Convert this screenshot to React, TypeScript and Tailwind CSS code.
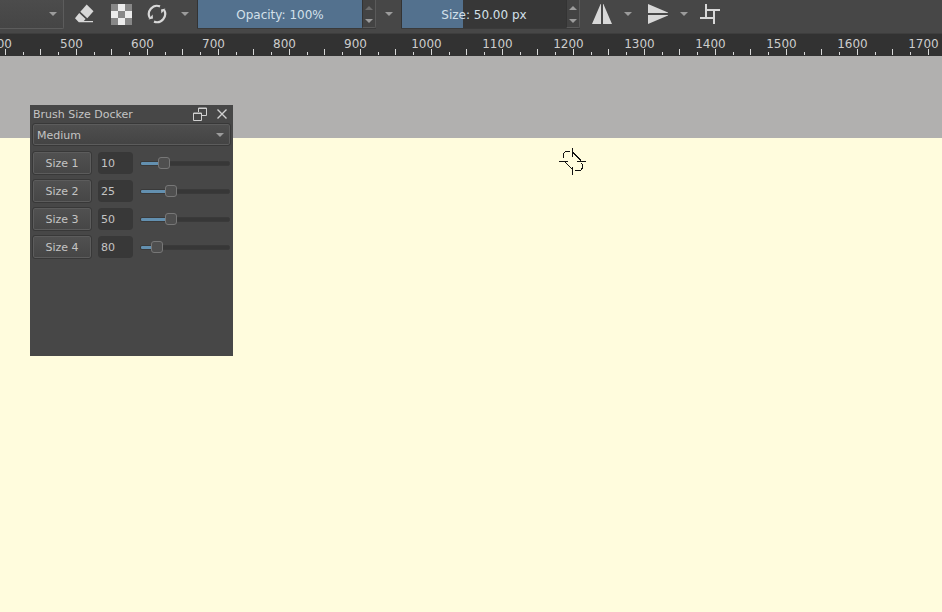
import { useState } from "react";

type BrushSize = {
  label: string;
  value: number;
  position: number;
};

const brushSizes: BrushSize[] = [
  { label: "Size 1", value: 10, position: 22 },
  { label: "Size 2", value: 25, position: 31 },
  { label: "Size 3", value: 50, position: 31 },
  { label: "Size 4", value: 80, position: 13 },
];

const rulerMarks = Array.from({ length: 14 }, (_, i) => 400 + i * 100);

function Caret({ up = false, dim = false }: { up?: boolean; dim?: boolean }) {
  return (
    <svg
      width="8"
      height="4"
      viewBox="0 0 8 4"
      className={dim ? "fill-[#6c6c6c]" : "fill-[#9c9c9c]"}
      aria-hidden="true"
    >
      <path d={up ? "M0 4L4 0L8 4Z" : "M0 0H8L4 4Z"} />
    </svg>
  );
}

function CaretButton({ label }: { label: string }) {
  return (
    <button
      type="button"
      aria-label={label}
      className="flex h-7 w-4 shrink-0 items-center justify-center"
    >
      <Caret />
    </button>
  );
}

interface SliderSpinProps {
  label: string;
  text: string;
  percent: number;
  atMax?: boolean;
}

function SliderSpin({ label, text, percent, atMax }: SliderSpinProps) {
  return (
    <div className="flex h-[29px] w-[179px] shrink-0 border-b border-[#3a3a3a]">
      <input
        type="text"
        aria-label={label}
        defaultValue={text}
        className="min-w-0 flex-1 border-l border-[#333] pt-px text-center text-[12px] text-[#d3e0ea] outline-none"
        style={{
          background: `linear-gradient(to right, #53718e ${percent}%, #373737 ${percent}%)`,
        }}
      />
      <div className="flex w-[14px] flex-col rounded-br-xs border border-t-0 border-[#5a5a5a] border-l-[#333] bg-[#434343]">
        <button
          type="button"
          aria-label={`Increase ${label}`}
          className="flex flex-1 items-center justify-center pt-0.5"
        >
          <Caret up dim={atMax} />
        </button>
        <button
          type="button"
          aria-label={`Decrease ${label}`}
          className="flex flex-1 items-center justify-center"
        >
          <Caret />
        </button>
      </div>
    </div>
  );
}

function Toolbar() {
  return (
    <header className="flex h-[33px] w-full items-start overflow-hidden bg-[#474747]">
      <div className="relative w-16 shrink-0">
        <select
          aria-label="Blending mode"
          className="h-[29px] w-full appearance-none rounded-br-xs border-r border-b border-[#5c5c5c] bg-linear-to-b from-[#4c4c4c] to-[#454545] outline-none"
        >
          <option aria-label="Normal" />
        </select>
        <span className="pointer-events-none absolute top-3 right-[7px]">
          <Caret />
        </span>
      </div>

      <button type="button" aria-label="Eraser" className="ml-[6px] p-1 pt-[3px]">
        <svg width="22" height="22" viewBox="0 0 22 22" fill="#d8d8d8">
          <path d="M12.7 1.5L19.5 8.2L13.3 15.2L6.3 8.7Z" />
          <path d="M5.2 10L11.6 16L9.8 18H19V19.2H4.8L1 15.2Z" />
        </svg>
      </button>
      <button type="button" aria-label="Preserve alpha" className="ml-[7px] p-1">
        <svg width="21" height="21" viewBox="0 0 21 21">
          <path fill="#888" d="M0 0H21V21H0Z" />
          <path
            fill="#ececec"
            d="M7 0h7v7H7ZM0 7h7v7H0ZM14 7h7v7h-7ZM7 14h7v7H7Z"
          />
        </svg>
      </button>
      <button type="button" aria-label="Reload preset" className="ml-[6px] p-1 pt-[3px]">
        <svg width="22" height="22" viewBox="0 0 22 22">
          <g fill="none" stroke="#d8d8d8" strokeWidth="2.2">
            <path d="M14 3.4A8.2 8.2 0 0 0 4 15.2" />
            <path d="M8 18.6A8.2 8.2 0 0 0 18 6.8" />
          </g>
          <path fill="#d8d8d8" d="M2.6 16.4L7 15.6L6.6 11.6ZM19.4 5.6L15 6.4L15.4 10.4Z" />
        </svg>
      </button>
      <div className="ml-[5px]">
        <CaretButton label="Reload options" />
      </div>

      <div className="ml-1">
        <SliderSpin label="Opacity" text="Opacity: 100%" percent={100} atMax />
      </div>
      <div className="mr-1 ml-[5px]">
        <CaretButton label="Opacity options" />
      </div>
      <SliderSpin label="Size" text="Size: 50.00 px" percent={37} />

      <button type="button" aria-label="Horizontal mirror" className="ml-2 p-1">
        <svg width="20" height="20" viewBox="0 0 20 20" fill="#d8d8d8">
          <path d="M9 0V20H0L8.6 0ZM11 0V20H20L11.4 0Z" />
        </svg>
      </button>
      <div className="ml-1">
        <CaretButton label="Horizontal mirror options" />
      </div>
      <button type="button" aria-label="Vertical mirror" className="ml-2 p-1">
        <svg width="20" height="20" viewBox="0 0 20 20" fill="#d8d8d8">
          <path d="M0 0V9H20V8.6ZM0 11V20L20 11.4V11Z" />
        </svg>
      </button>
      <div className="ml-1">
        <CaretButton label="Vertical mirror options" />
      </div>
      <button type="button" aria-label="Wrap around" className="ml-1 p-1">
        <svg
          width="20"
          height="20"
          viewBox="0 0 20 20"
          fill="none"
          stroke="#d8d8d8"
          strokeWidth="2"
        >
          <path d="M6 0V14M0 14H15M5 6H20M14 6V20" />
        </svg>
      </button>
    </header>
  );
}

function Ruler() {
  return (
    <div className="h-[23px] w-full overflow-hidden border-t border-[#3e3e3e] bg-[#323232]">
      <div className="-ml-[35px] flex">
        {rulerMarks.map((mark) => (
          <div key={mark} className="w-[71px] shrink-0">
            <div className="h-[15px] pt-[3px] text-center text-[12px] leading-[14px] text-[#cdcdcd]">
              {mark}
            </div>
            <div className="flex items-end gap-[17px] pl-1">
              <span className="h-[6px] w-px bg-[#d8d8d8]" />
              <span className="h-[3px] w-px bg-[#d8d8d8]" />
              <span className="h-[6px] w-px bg-[#d8d8d8]" />
              <span className="h-[3px] w-px bg-[#d8d8d8]" />
            </div>
          </div>
        ))}
      </div>
    </div>
  );
}

function BrushSizeRow({ label, value, position }: BrushSize) {
  const [pos, setPos] = useState(position);
  // the thumb is 12px wide, so the filled part ends at its centre
  const fill = `calc(${pos}% + ${6 - pos * 0.12}px)`;

  return (
    <div className="flex items-center">
      <button
        type="button"
        className="h-[22px] w-[58px] shrink-0 rounded-xs border border-[#5c5c5c] bg-linear-to-b from-[#505050] to-[#464646] pt-0.5 outline outline-[#383838]"
      >
        {label}
      </button>
      <input
        type="text"
        aria-label={`${label} value`}
        defaultValue={value}
        className="ml-[7px] h-[22px] w-[35px] shrink-0 rounded-sm bg-[#383838] pl-[3px] outline-none"
      />
      <input
        type="range"
        aria-label={`${label} slider`}
        value={pos}
        onChange={(e) => setPos(Number(e.target.value))}
        className="ml-[7px] h-[5px] min-w-0 flex-1 appearance-none rounded-xs border border-[#3a3a3a] [&::-webkit-slider-thumb]:size-3 [&::-webkit-slider-thumb]:appearance-none [&::-webkit-slider-thumb]:rounded-[3px] [&::-webkit-slider-thumb]:border [&::-webkit-slider-thumb]:border-[#777] [&::-webkit-slider-thumb]:bg-[#4f4f4f]"
        style={{
          background: `linear-gradient(to right, #6390b0 ${fill}, #373737 ${fill})`,
        }}
      />
    </div>
  );
}

function BrushSizeDocker() {
  return (
    <section className="absolute top-[49px] left-[30px] min-h-[251px] w-[203px] bg-[#474747] px-[3px] text-[11px] text-[#c4c4c4]">
      <div className="flex h-[18px] items-center">
        <h2 className="flex-1 pt-0.5">Brush Size Docker</h2>
        <button type="button" aria-label="Float docker">
          <svg
            width="14"
            height="14"
            viewBox="0 0 14 14"
            fill="none"
            stroke="#d0d0d0"
          >
            <path d="M5.5 5V1H13.5V8.5H9M5 1.5H14M.5 6H8.5V13.5H.5ZM0 6.5H9" />
          </svg>
        </button>
        <button type="button" aria-label="Close docker" className="mr-[3px] ml-[10px]">
          <svg
            width="10"
            height="10"
            viewBox="0 0 10 10"
            fill="none"
            stroke="#d0d0d0"
            strokeWidth="1.4"
          >
            <path d="M.5 .5L9.5 9.5M9.5 .5L.5 9.5" />
          </svg>
        </button>
      </div>
      <div className="relative mt-px">
        <select
          aria-label="Brush group"
          defaultValue="Medium"
          className="block h-[21px] w-full appearance-none rounded-xs border border-[#5c5c5c] bg-linear-to-b from-[#4e4e4e] to-[#444] pt-[3px] pl-[3px] outline outline-[#383838]"
        >
          <option>Small</option>
          <option>Medium</option>
          <option>Large</option>
        </select>
        <span className="pointer-events-none absolute top-[9px] right-[6px]">
          <Caret />
        </span>
      </div>
      <div className="mt-[7px] flex flex-col gap-[6px]">
        {brushSizes.map((size) => (
          <BrushSizeRow key={size.label} {...size} />
        ))}
      </div>
    </section>
  );
}

function BrushCursor() {
  return (
    <svg
      width="27"
      height="27"
      viewBox="0 0 27 27"
      fill="none"
      stroke="#111"
      shapeRendering="crispEdges"
      className="absolute top-[92px] left-[559px]"
      aria-hidden="true"
    >
      <path d="M13.5 0V9M13.5 19V27M0 13.5H9M18 13.5H27" />
      <path d="M11 3.5H6.5L4.5 5.5V9.5M6 14L13.5 21.5M14 4.5L22 12.5M22.5 15L23.5 17V20L21.5 22.5H16" />
    </svg>
  );
}

export default function App() {
  return (
    <div className="flex min-h-screen w-full flex-col overflow-hidden font-['DejaVu_Sans',sans-serif] text-[11px]">
      <Toolbar />
      <Ruler />
      <main className="relative flex flex-1 flex-col bg-[#fffcdd]">
        <div className="h-[82px] bg-[#b1b0af]" />
        <BrushSizeDocker />
        <BrushCursor />
      </main>
    </div>
  );
}
